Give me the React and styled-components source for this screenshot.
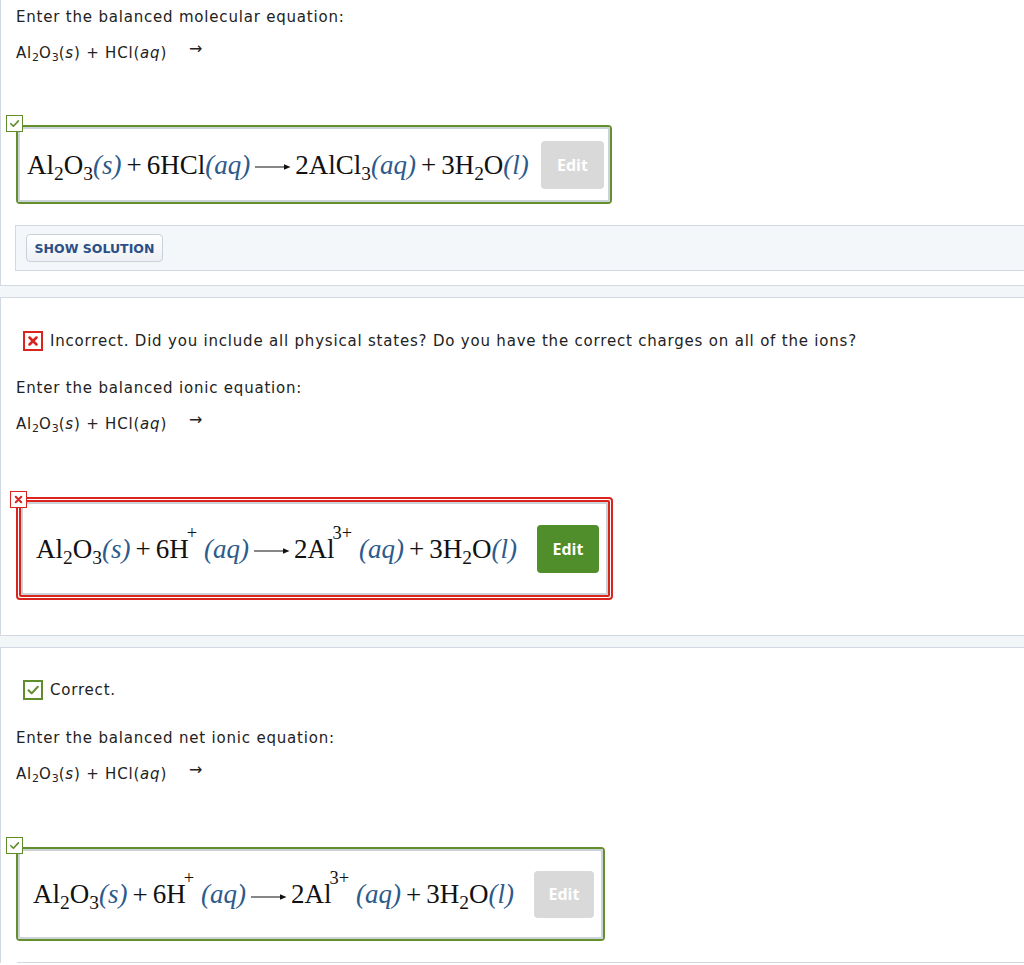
import React from 'react';
import styled, { createGlobalStyle } from 'styled-components';

const GlobalStyle = createGlobalStyle`
  html, body { margin: 0; padding: 0; background: #fff; }
  body { font-family: "DejaVu Sans", Verdana, sans-serif; color: #222; }
`;

const Page = styled.div`
  display: flex;
  flex-direction: column;
  width: 1024px;
  overflow: hidden;
`;

const Section = styled.section`
  display: flex;
  flex-direction: column;
  align-items: flex-start;
  border-left: 1px solid #d3d9e2;
  border-top: ${p => (p.$first ? 'none' : '1px solid #d3d9e2')};
  border-bottom: ${p => (p.$last ? 'none' : '1px solid #d3d9e2')};
  padding: ${p => p.$pt}px 0 ${p => p.$pb}px 15px;
`;

const Band = styled.div`
  height: 11px;
  background: #f3f6f9;
`;

const bodyText = `
  font-size: 15px;
  letter-spacing: 0.8px;
  line-height: 20px;
  color: #222;
`;

const Prompt = styled.p`
  margin: ${p => p.$mt}px 0 0;
  ${bodyText}
`;

const ChemLine = styled.div`
  margin-top: 12px;
  ${bodyText}
  height: 20px;
  white-space: nowrap;
`;

const TSub = styled.sub`
  font-size: 11px;
  letter-spacing: 0;
  vertical-align: -3px;
  line-height: 0;
`;

const SmallArrow = styled.span`
  display: inline-block;
  margin-left: 22px;
  font-size: 16px;
  vertical-align: 4px;
`;

const Feedback = styled.div`
  display: flex;
  align-items: center;
  gap: 7px;
  margin-left: 7px;
  ${bodyText}
`;

const StatusIcon = styled.span`
  display: flex;
  align-items: center;
  justify-content: center;
  box-sizing: border-box;
  width: ${p => p.$size}px;
  height: ${p => p.$size}px;
  border: ${p => (p.$size > 18 ? 2 : 1.5)}px solid ${p => (p.$wrong ? '#d9251d' : '#5f8d2c')};
  background: #fff;
`;

const BoxWrap = styled.div`
  position: relative;
  margin-top: ${p => p.$mt}px;
`;

const Badge = styled.div`
  position: absolute;
  left: ${p => (p.$wrong ? -6 : -10)}px;
  top: ${p => (p.$wrong ? -6 : -10)}px;
  z-index: 2;
`;

const AnswerBox = styled.div`
  display: flex;
  box-sizing: border-box;
  width: ${p => p.$w}px;
  height: ${p => p.$h}px;
  border: 2px solid ${p => (p.$wrong ? '#d9251d' : '#63902c')};
  border-radius: 4px;
  padding: ${p => (p.$wrong ? '1px' : '0')};
  background: #fff;
`;

const InnerRing = styled.div`
  flex: 1;
  display: flex;
  border: ${p => (p.$wrong ? '2px solid #d9251d' : 'none')};
  border-radius: 2px;
`;

const AnswerContent = styled.div`
  flex: 1;
  display: flex;
  align-items: center;
  justify-content: space-between;
  border: 2px solid #ccd2da;
  padding: 0 ${p => p.$pr}px 0 ${p => p.$pl}px;
`;

const Equation = styled.div`
  font-family: "Liberation Serif", "Times New Roman", serif;
  font-size: 27px;
  line-height: 30px;
  color: #111;
  white-space: nowrap;
`;

const ESub = styled.sub`
  font-size: 0.72em;
  vertical-align: -0.3em;
  line-height: 0;
`;

const ESup = styled.sup`
  font-size: 0.68em;
  vertical-align: 1.05em;
  line-height: 0;
  margin-left: -2px;
  margin-right: ${p => p.$mr || 0}px;
`;

const State = styled.span`
  color: #2c5b8c;
  font-style: italic;
`;

const Op = styled.span`
  margin: 0 5px;
`;

const ArrowSvg = styled.svg`
  margin: 0 4px 0 5px;
  vertical-align: 2px;
`;

const EditButton = styled.button`
  flex: none;
  width: ${p => p.$w}px;
  height: ${p => p.$h}px;
  border: none;
  border-radius: 4px;
  background: ${p => (p.$active ? '#4f8e2a' : '#d9d9d9')};
  color: #fff;
  font-family: "Open Sans", "DejaVu Sans", sans-serif;
  font-weight: 700;
  font-size: 16px;
  padding: 0;
`;

const SolutionBar = styled.div`
  display: flex;
  align-items: center;
  align-self: stretch;
  box-sizing: border-box;
  margin: 21px 0 0 -1px;
  height: 46px;
  padding-left: 10px;
  background: #f4f7fa;
  border: 1px solid #d3d9e2;
  border-right: none;
`;

const SolutionButton = styled.button`
  width: 137px;
  height: 28px;
  padding: 0;
  border: 1px solid #c9d1db;
  border-radius: 4px;
  background: linear-gradient(#ffffff, #edf0f4);
  color: #2b4f86;
  font-family: "DejaVu Sans", Verdana, sans-serif;
  font-weight: 700;
  font-size: 12.5px;
`;

const Divider = styled.div`
  align-self: stretch;
  margin: 21px 0 0 1px;
  height: 1px;
  background: #d3d9e2;
`;

const CheckMark = ({ size }) => (
  <svg width={size} height={size} viewBox="0 0 12 12">
    <path d="M2.6 6.2 L5 8.5 L9.6 3.6" fill="none" stroke="#5f8d2c" strokeWidth="1.5" strokeLinecap="round" strokeLinejoin="round" />
  </svg>
);

const Cross = ({ size }) => (
  <svg width={size} height={size} viewBox="0 0 12 12">
    <path d="M3 3 L9 9 M9 3 L3 9" fill="none" stroke="#d9251d" strokeWidth="2.2" strokeLinecap="round" />
  </svg>
);

const Status = ({ wrong, size }) => (
  <StatusIcon $wrong={wrong} $size={size}>
    {wrong ? <Cross size={size - 6} /> : <CheckMark size={size - 4} />}
  </StatusIcon>
);

const LongArrow = () => (
  <ArrowSvg width="36" height="10" viewBox="0 0 36 10">
    <line x1="0" y1="5" x2="33" y2="5" stroke="#111" strokeWidth="1.2" />
    <path d="M29 2.2 L35.5 5 L29 7.8 Z" fill="#111" />
  </ArrowSvg>
);

const ReactantLine = () => (
  <ChemLine>
    Al<TSub>2</TSub>O<TSub>3</TSub>(<i>s</i>) + HCl(<i>aq</i>)
    <SmallArrow>→</SmallArrow>
  </ChemLine>
);

const MolecularEq = () => (
  <Equation>
    Al<ESub>2</ESub>O<ESub>3</ESub><State>(s)</State>
    <Op>+</Op>6HCl<State>(aq)</State>
    <LongArrow />
    2AlCl<ESub>3</ESub><State>(aq)</State>
    <Op>+</Op>3H<ESub>2</ESub>O<State>(l)</State>
  </Equation>
);

const IonicEq = () => (
  <Equation>
    Al<ESub>2</ESub>O<ESub>3</ESub><State>(s)</State>
    <Op>+</Op>6H<ESup $mr={7}>+</ESup><State>(aq)</State>
    <LongArrow />
    2Al<ESup $mr={7}>3+</ESup><State>(aq)</State>
    <Op>+</Op>3H<ESub>2</ESub>O<State>(l)</State>
  </Equation>
);

const Answer = ({ wrong, w, h, pl, pr, active, bw, bh, children }) => (
  <BoxWrap $mt={67}>
    <Badge $wrong={wrong}>
      <Status wrong={wrong} size={17} />
    </Badge>
    <AnswerBox $wrong={wrong} $w={w} $h={h}>
      <InnerRing $wrong={wrong}>
        <AnswerContent $pl={pl} $pr={pr}>
          {children}
          <EditButton $active={active} $w={bw} $h={bh}>Edit</EditButton>
        </AnswerContent>
      </InnerRing>
    </AnswerBox>
  </BoxWrap>
);

export default function App() {
  return (
    <>
      <GlobalStyle />
      <Page>
        <Section $first $pt={7} $pb={14}>
          <Prompt $mt={0}>Enter the balanced molecular equation:</Prompt>
          <ReactantLine />
          <BoxWrap $mt={66}>
            <Badge>
              <Status size={17} />
            </Badge>
            <AnswerBox $w={596} $h={79}>
              <InnerRing>
                <AnswerContent $pl={7} $pr={4}>
                  <MolecularEq />
                  <EditButton $w={63} $h={48}>Edit</EditButton>
                </AnswerContent>
              </InnerRing>
            </AnswerBox>
          </BoxWrap>
          <SolutionBar>
            <SolutionButton>SHOW SOLUTION</SolutionButton>
          </SolutionBar>
        </Section>
        <Band />
        <Section $pt={33} $pb={35}>
          <Feedback>
            <Status wrong size={20} />
            Incorrect. Did you include all physical states? Do you have the correct charges on all of the ions?
          </Feedback>
          <Prompt $mt={27}>Enter the balanced ionic equation:</Prompt>
          <ReactantLine />
          <Answer wrong w={597} h={103} pl={13} pr={7} active bw={62} bh={48}>
            <IonicEq />
          </Answer>
        </Section>
        <Band />
        <Section $last $pt={32} $pb={0}>
          <Feedback>
            <Status size={20} />
            Correct.
          </Feedback>
          <Prompt $mt={28}>Enter the balanced net ionic equation:</Prompt>
          <ReactantLine />
          <Answer w={589} h={94} pl={13} pr={7} bw={60} bh={47}>
            <IonicEq />
          </Answer>
          <Divider />
        </Section>
      </Page>
    </>
  );
}
